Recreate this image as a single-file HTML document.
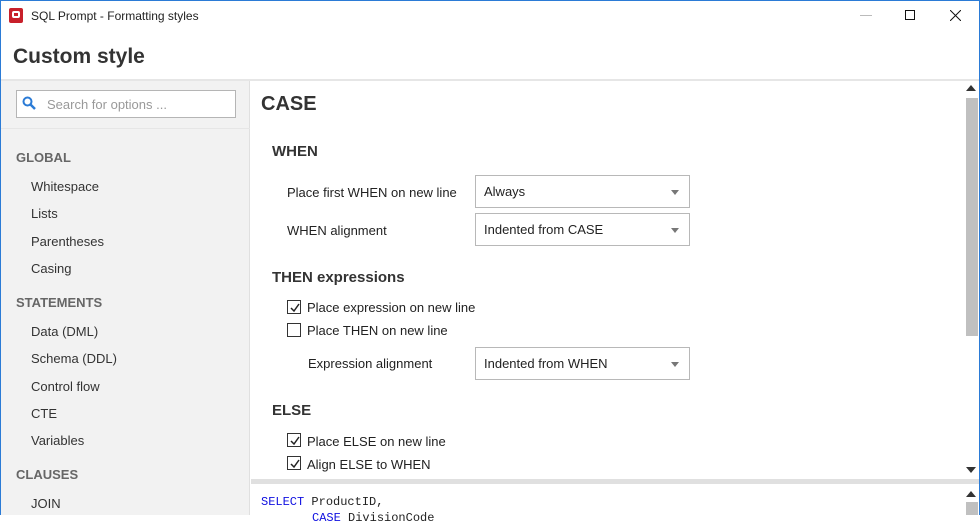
<!DOCTYPE html>
<html><head><meta charset="utf-8"><style>
*{margin:0;padding:0;box-sizing:border-box}
body{width:980px;height:515px;overflow:hidden;background:#fff;font-family:"Segoe UI","Liberation Sans",sans-serif;color:#222;position:relative}
.abs{position:absolute}
.t{font-size:13px;color:#222;white-space:nowrap}
.nav{position:absolute;left:31px;font-size:13px;color:#333}
.navh{position:absolute;left:16px;font-size:13px;font-weight:bold;color:#666}
.sel{position:absolute;left:475px;width:215px;height:33px;border:1px solid #b8b8b8;background:#fff;font-size:13px;padding:8px 8px}
.sel:after{content:"";position:absolute;right:10px;top:14px;border-left:4px solid transparent;border-right:4px solid transparent;border-top:5px solid #777}
.cb{position:absolute;left:287px;width:14px;height:14px;border:1px solid #333;background:#fff}
.cb svg{position:absolute;left:1px;top:1px}
h3{position:absolute;left:272px;font-size:15px;font-weight:bold;color:#333}
</style></head><body>
<div class="abs" style="left:0;top:0;width:980px;height:515px;border:1px solid #2b7bd6;border-bottom:none"></div>
<div class="abs" style="left:9px;top:8px;width:14px;height:15px;background:#c8202a;border-radius:2px"></div>
<div class="abs" style="left:12px;top:11px;width:8px;height:7px;border:2px solid #fff;border-radius:2px"></div>
<div class="abs t" style="left:31px;top:9px;font-size:12px">SQL Prompt - Formatting styles</div>
<div class="abs" style="left:860px;top:15px;width:12px;height:1px;background:#bbb"></div>
<div class="abs" style="left:905px;top:10px;width:10px;height:10px;border:1px solid #111"></div>
<svg class="abs" style="left:950px;top:10px" width="11" height="11"><path d="M0 0L11 11M11 0L0 11" stroke="#111" stroke-width="1"/></svg>
<div class="abs" style="left:13px;top:45px;font-size:21px;font-weight:bold;color:#333">Custom style</div>
<div class="abs" style="left:1px;top:79px;width:978px;height:2px;background:#e6e6e6"></div>
<div class="abs" style="left:1px;top:81px;width:249px;height:434px;background:#f2f2f2;border-right:1px solid #e0e0e0"></div>
<div class="abs" style="left:16px;top:90px;width:220px;height:28px;border:1px solid #b5b5b5;background:#fff"></div>
<svg class="abs" style="left:22px;top:96px" width="14" height="14"><circle cx="5.5" cy="5.5" r="4" stroke="#2b7bd6" stroke-width="2" fill="none"/><path d="M8.5 8.5L13 13" stroke="#2b7bd6" stroke-width="2.5"/></svg>
<div class="abs" style="left:47px;top:97px;font-size:13px;color:#999">Search for options ...</div>
<div class="abs" style="left:1px;top:128px;width:249px;height:1px;background:#e6e6e6"></div>
<div class="navh" style="top:150px">GLOBAL</div>
<div class="nav" style="top:179px">Whitespace</div>
<div class="nav" style="top:206px">Lists</div>
<div class="nav" style="top:234px">Parentheses</div>
<div class="nav" style="top:261px">Casing</div>
<div class="navh" style="top:295px">STATEMENTS</div>
<div class="nav" style="top:324px">Data (DML)</div>
<div class="nav" style="top:351px">Schema (DDL)</div>
<div class="nav" style="top:379px">Control flow</div>
<div class="nav" style="top:406px">CTE</div>
<div class="nav" style="top:433px">Variables</div>
<div class="navh" style="top:467px">CLAUSES</div>
<div class="nav" style="top:496px">JOIN</div>

<div class="abs" style="left:261px;top:93px;font-size:20px;font-weight:bold;color:#333">CASE</div>
<h3 style="top:143px">WHEN</h3>
<div class="abs t" style="left:287px;top:185px">Place first WHEN on new line</div>
<div class="sel" style="top:175px">Always</div>
<div class="abs t" style="left:287px;top:223px">WHEN alignment</div>
<div class="sel" style="top:213px">Indented from CASE</div>
<h3 style="top:269px">THEN expressions</h3>
<div class="cb" style="top:300px"><svg width="12" height="12"><path d="M2 6L5 9L10 2" stroke="#222" stroke-width="1.5" fill="none"/></svg></div>
<div class="abs t" style="left:307px;top:300px">Place expression on new line</div>
<div class="cb" style="top:323px"></div>
<div class="abs t" style="left:307px;top:323px">Place THEN on new line</div>
<div class="abs t" style="left:308px;top:356px">Expression alignment</div>
<div class="sel" style="top:347px">Indented from WHEN</div>
<h3 style="top:402px">ELSE</h3>
<div class="cb" style="top:433px"><svg width="12" height="12"><path d="M2 6L5 9L10 2" stroke="#222" stroke-width="1.5" fill="none"/></svg></div>
<div class="abs t" style="left:307px;top:434px">Place ELSE on new line</div>
<div class="cb" style="top:456px"><svg width="12" height="12"><path d="M2 6L5 9L10 2" stroke="#222" stroke-width="1.5" fill="none"/></svg></div>
<div class="abs t" style="left:307px;top:457px">Align ELSE to WHEN</div>

<div class="abs" style="left:966px;top:85px;border-left:5px solid transparent;border-right:5px solid transparent;border-bottom:6px solid #333"></div>
<div class="abs" style="left:966px;top:98px;width:12px;height:238px;background:#c0c0c0"></div>
<div class="abs" style="left:966px;top:467px;border-left:5px solid transparent;border-right:5px solid transparent;border-top:6px solid #333"></div>
<div class="abs" style="left:251px;top:479px;width:728px;height:5px;background:#e0e0e0"></div>
<div class="abs" style="left:966px;top:491px;border-left:5px solid transparent;border-right:5px solid transparent;border-bottom:6px solid #333"></div>
<div class="abs" style="left:966px;top:502px;width:12px;height:13px;background:#c0c0c0"></div>
<div class="abs" style="left:261px;top:495px;font-family:'Liberation Mono',monospace;font-size:12px;color:#222;white-space:pre"><span style="color:#1010e0">SELECT</span> ProductID,</div>
<div class="abs" style="left:312px;top:511px;font-family:'Liberation Mono',monospace;font-size:12px;color:#1010e0;white-space:pre">CASE <span style="color:#222">DivisionCode</span></div>
</body></html>
